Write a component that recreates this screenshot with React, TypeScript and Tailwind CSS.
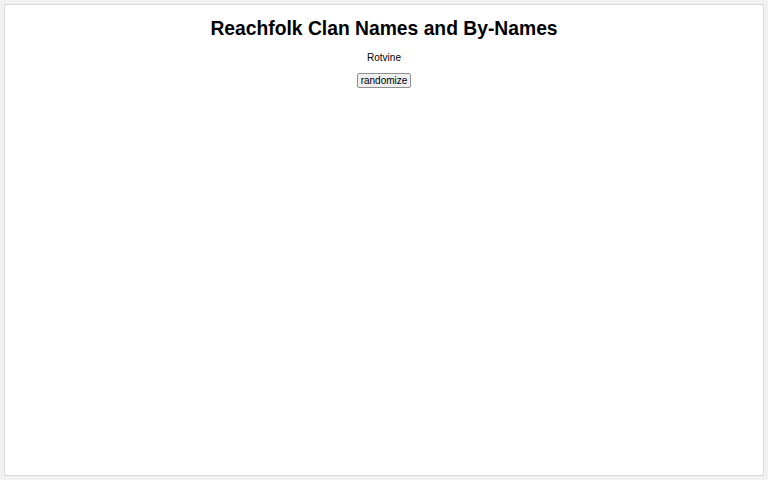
import { useState } from 'react'

const names = ['Rotvine', 'Ashfen', 'Stonehollow', 'Crowmire', 'Thornwake', 'Bramblecrag']

export default function App() {
  const [name, setName] = useState(names[0])

  function randomize() {
    setName(names[Math.floor(Math.random() * names.length)])
  }

  return (
    <div className="h-[480px] bg-[#f2f2f2] p-[4px] font-['Liberation_Sans',Arial,sans-serif] text-black">
      <div className="flex h-full flex-col items-center border border-[#dcdcdc] bg-white">
        <h1 className="mt-[12px] text-[19.3px] font-bold leading-[24px]">Reachfolk Clan Names and By-Names</h1>
        <p className="mt-[11px] text-[10px] leading-[12px]">{name}</p>
        <button
          onClick={randomize}
          className="mt-[9px] rounded-[2px] border border-[#8f8f8f] bg-[#efefef] px-[3px] text-[10px] leading-[13px]"
        >
          randomize
        </button>
      </div>
    </div>
  )
}
